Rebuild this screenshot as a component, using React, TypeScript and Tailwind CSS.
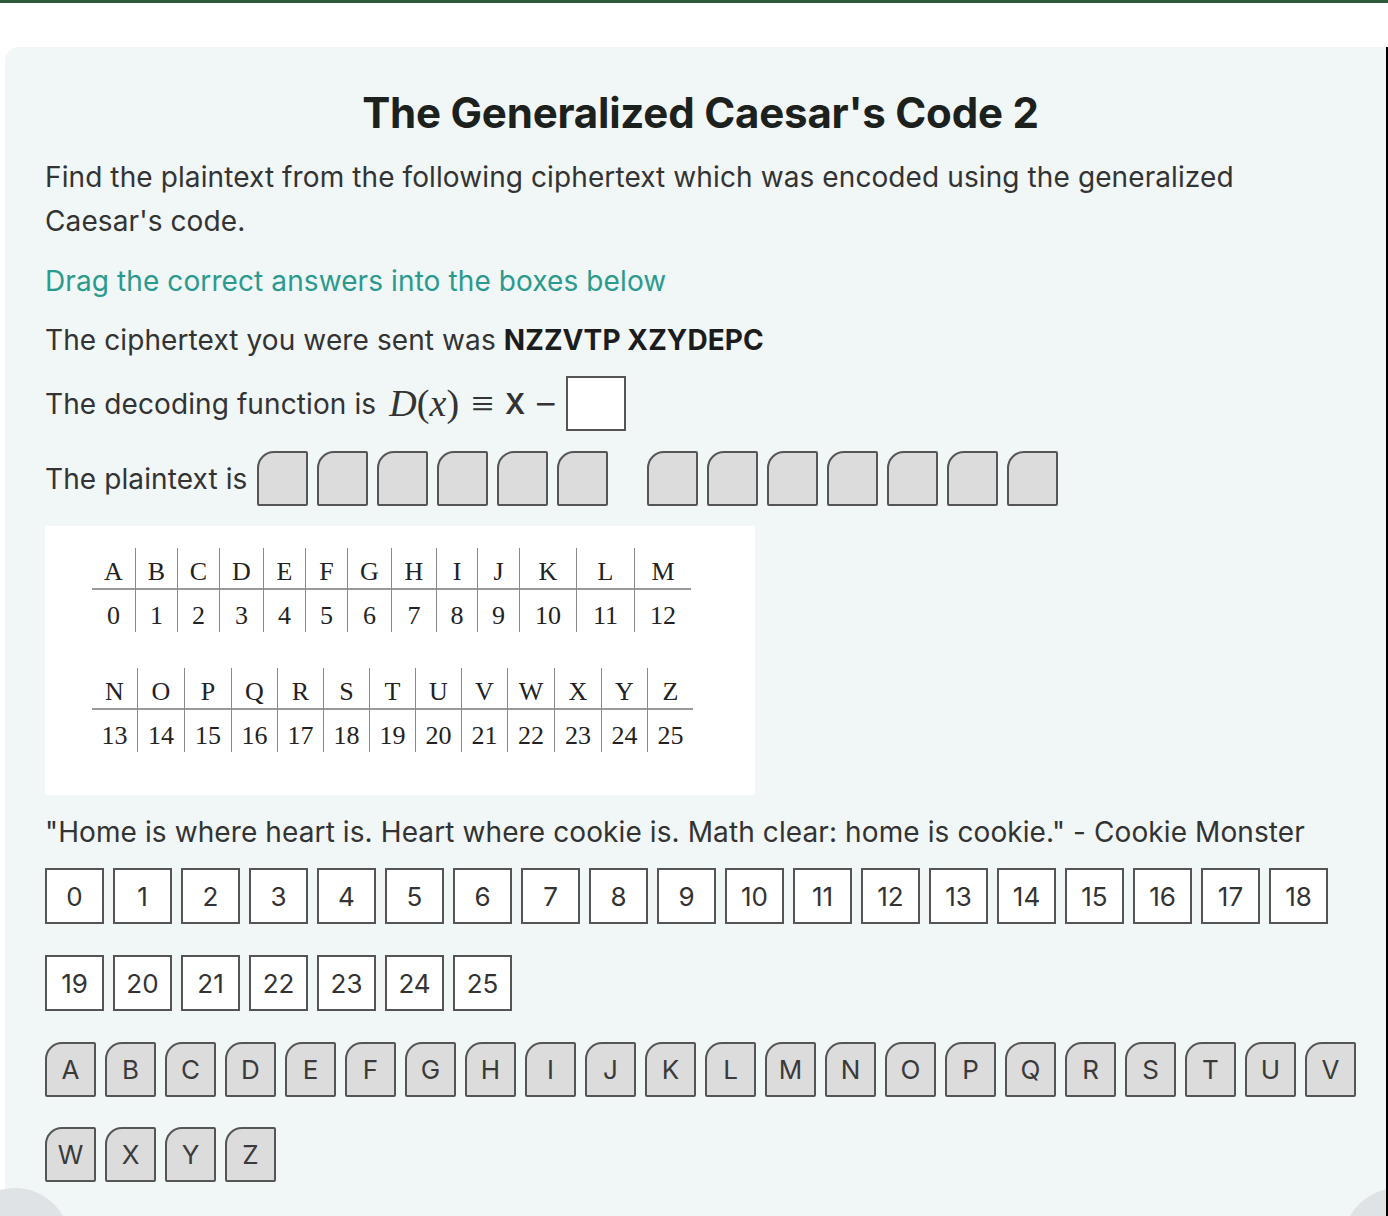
import React from 'react';

const row1 = [
  { l: 'A', n: '0', w: 43 },
  { l: 'B', n: '1', w: 42 },
  { l: 'C', n: '2', w: 42 },
  { l: 'D', n: '3', w: 44 },
  { l: 'E', n: '4', w: 42 },
  { l: 'F', n: '5', w: 42 },
  { l: 'G', n: '6', w: 44 },
  { l: 'H', n: '7', w: 45 },
  { l: 'I', n: '8', w: 41 },
  { l: 'J', n: '9', w: 42 },
  { l: 'K', n: '10', w: 57 },
  { l: 'L', n: '11', w: 58 },
  { l: 'M', n: '12', w: 57 },
];

const row2 = [
  { l: 'N', n: '13', w: 45 },
  { l: 'O', n: '14', w: 47 },
  { l: 'P', n: '15', w: 47 },
  { l: 'Q', n: '16', w: 46 },
  { l: 'R', n: '17', w: 46 },
  { l: 'S', n: '18', w: 46 },
  { l: 'T', n: '19', w: 46 },
  { l: 'U', n: '20', w: 46 },
  { l: 'V', n: '21', w: 46 },
  { l: 'W', n: '22', w: 47 },
  { l: 'X', n: '23', w: 47 },
  { l: 'Y', n: '24', w: 46 },
  { l: 'Z', n: '25', w: 46 },
];

const numbers = Array.from({ length: 26 }, (_, i) => String(i));
const letters = 'ABCDEFGHIJKLMNOPQRSTUVWXYZ'.split('');

// one row of the A=0 ... Z=25 lookup table
const TableRow: React.FC<{ cols: { l: string; n: string; w: number }[] }> = ({ cols }) => (
  <div className="flex">
    {cols.map((c, i) => (
      <div
        key={c.l}
        style={{ width: c.w }}
        className={`flex flex-col ${i > 0 ? 'border-l border-[#8a8a8a]' : ''}`}
      >
        <div className="h-[42px] flex items-end justify-center pb-[3px] border-b-2 border-[#9a9a9a]">{c.l}</div>
        <div className="h-[42px] flex items-center justify-center pt-[10px]">{c.n}</div>
      </div>
    ))}
  </div>
);

// grey drop slot / letter tile with the clipped top-left corner
const LetterTile: React.FC<{ label?: string }> = ({ label }) => (
  <div className="w-[51px] h-[55px] bg-[#dcdcdc] border-2 border-[#555] rounded-tl-[17px] rounded-tr-[2px] rounded-b-[2px] flex items-center justify-center text-[26px] text-[#3a3a3a]">
    {label}
  </div>
);

const NumberTile: React.FC<{ label: string }> = ({ label }) => (
  <div className="w-[59px] h-[56px] bg-white border-2 border-[#555] flex items-center justify-center text-[26px] text-[#333]">
    {label}
  </div>
);

export default function App() {
  return (
    <div className="relative h-[1216px] overflow-hidden bg-white flex flex-col font-['Inter','Liberation_Sans',sans-serif]">
      <div className="h-[3px] bg-[#2c5a3a] shrink-0" />
      <div className="flex flex-1 pt-[44px]">
        <div className="flex-1 ml-[5px] bg-[#f1f6f6] rounded-tl-[14px] pl-[40px] pr-[30px] pt-[41px] text-[28px] tracking-[0.1px] text-[#333]">
          <h1 className="text-[42px] leading-[50px] font-bold text-center text-[#1c211e] tracking-[-0.2px]">
            The Generalized Caesar's Code 2
          </h1>

          <p className="mt-[17px] leading-[44px]">
            Find the plaintext from the following ciphertext which was encoded using the generalized Caesar's code.
          </p>

          <p className="mt-[16px] leading-[44px] text-[#2b9a8e]">Drag the correct answers into the boxes below</p>

          <p className="mt-[15px] leading-[44px]">
            The ciphertext you were sent was <span className="font-bold text-[#1c1c1c]">NZZVTP XZYDEPC</span>
          </p>

          <div className="mt-[14px] h-[55px] flex items-center">
            <span>The decoding function is</span>
            <span className="ml-[13px] font-['Liberation_Serif',serif] italic text-[38px]">
              D<span className="not-italic">(</span>x<span className="not-italic">)</span>
            </span>
            <span className="ml-[12px] font-['Liberation_Serif',serif] text-[40px] leading-none">≡</span>
            <span className="ml-[11px] font-semibold">X</span>
            <span className="ml-[10px] font-['Liberation_Sans',sans-serif] text-[36px] leading-none">−</span>
            <div className="ml-[10px] w-[60px] h-[55px] bg-white border-2 border-[#555]" />
          </div>

          <div className="mt-[20px] flex items-center">
            <span className="mr-[10px]">The plaintext is</span>
            <div className="flex gap-[9px]">
              {Array.from({ length: 6 }).map((_, i) => (
                <LetterTile key={i} />
              ))}
            </div>
            <div className="flex gap-[9px] ml-[39px]">
              {Array.from({ length: 7 }).map((_, i) => (
                <LetterTile key={i} />
              ))}
            </div>
          </div>

          <div className="mt-[20px] w-[710px] h-[269px] bg-white pl-[47px] pt-[22px] font-['Liberation_Serif',serif] text-[26px] text-[#222] leading-none tracking-normal">
            <TableRow cols={row1} />
            <div className="mt-[36px]">
              <TableRow cols={row2} />
            </div>
          </div>

          <p className="mt-[15px] leading-[44px]">
            "Home is where heart is. Heart where cookie is. Math clear: home is cookie." - Cookie Monster
          </p>

          <div className="mt-[14px] flex flex-wrap gap-x-[9px] gap-y-[31px] tracking-normal">
            {numbers.map((n) => (
              <NumberTile key={n} label={n} />
            ))}
          </div>

          <div className="mt-[31px] flex flex-wrap gap-x-[9px] gap-y-[30px] tracking-normal">
            {letters.map((l) => (
              <LetterTile key={l} label={l} />
            ))}
          </div>
        </div>
        <div className="w-[2px] bg-black shrink-0 relative z-10" />
      </div>

      <div className="absolute left-[-40px] top-[1188px] w-[110px] h-[110px] rounded-full bg-[#dfe3e6]" />
      <div className="absolute left-[1343px] top-[1188px] w-[110px] h-[110px] rounded-full bg-[#dfe3e6]" />
    </div>
  );
}
